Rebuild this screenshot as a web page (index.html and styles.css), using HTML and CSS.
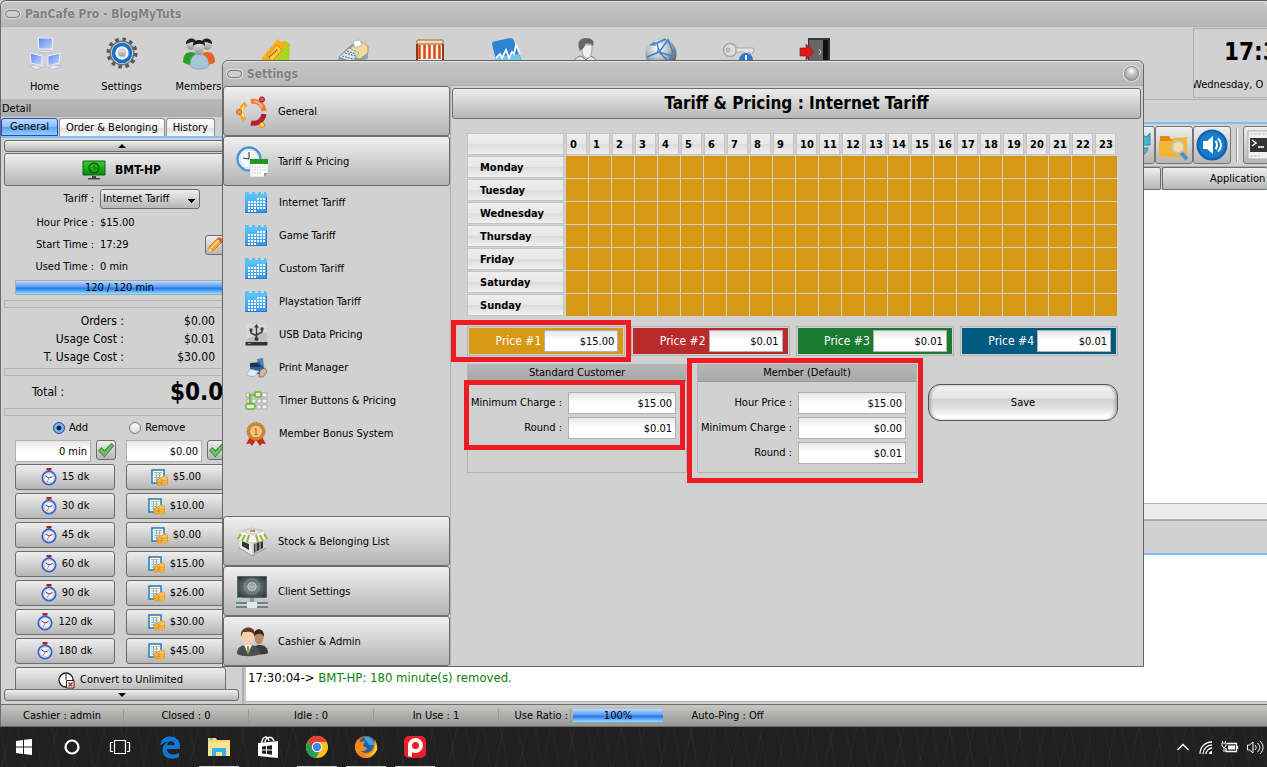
FILE: index.html
```html
<!DOCTYPE html>
<html lang="en">

<head>
    <meta charset="utf-8">
    <title>PanCafe Pro</title>
    <link rel="stylesheet" href="styles.css">
</head>

<body>
    <!-- shared icons and gradients -->
    <svg class="defs" width="0" height="0" aria-hidden="true">
        <defs>
            <linearGradient id="gblue" x1="0" y1="0" x2="0" y2="1"><stop offset="0" stop-color="#5cc4fa"/><stop offset="1" stop-color="#3a94e6"/></linearGradient>
            <linearGradient id="gscreen" x1="0" y1="0" x2="1" y2="1"><stop offset="0" stop-color="#5f83ee"/><stop offset="1" stop-color="#c2d6ff"/></linearGradient>
            <linearGradient id="ggreen" x1="0" y1="0" x2="0" y2="1"><stop offset="0" stop-color="#37d42c"/><stop offset="1" stop-color="#078a08"/></linearGradient>
            <linearGradient id="gsilver" x1="0" y1="0" x2="0" y2="1"><stop offset="0" stop-color="#f4f4f4"/><stop offset="1" stop-color="#8f8f8f"/></linearGradient>
            <radialGradient id="gball" cx=".4" cy=".3" r=".7"><stop offset="0" stop-color="#fff"/><stop offset=".5" stop-color="#b9bfc5"/><stop offset="1" stop-color="#50565c"/></radialGradient>
            <radialGradient id="gtube" cx=".5" cy=".5" r=".6"><stop offset="0" stop-color="#b4c2c0"/><stop offset=".5" stop-color="#5c6d6c"/><stop offset="1" stop-color="#303a3b"/></radialGradient>
        </defs>
        <symbol id="i-cal" viewBox="0 0 24 24">
            <path d="M2 1h3v2h3V1h3v2h3V1h3v2h3V1h2v2h1v18l-1 1H2l-1-1V1z" fill="#56c3fb"/>
            <rect x="1" y="4" width="22" height="18" rx="1" fill="url(#gblue)"/>
            <path d="M1.500 21.500h21V6" fill="none" stroke="#2577cf"/>
            <path d="M13 8h8M4 11h17M4 14h17M4 17h17M4 20h8" stroke="#fff" stroke-width="2" stroke-dasharray="2 1"/>
        </symbol>
        <symbol id="i-watch" viewBox="0 0 16 18">
            <rect x="5.500" y="0" width="5" height="2.500" fill="#b3201f"/>
            <path d="M7 2h2v2H7z" fill="#666"/>
            <circle cx="8" cy="10" r="6.700" fill="#f3f7ff" stroke="#3d63cb" stroke-width="1.800"/>
            <circle cx="8" cy="10" r="4.800" fill="none" stroke="#c6cfdf"/>
            <path d="M8 10L4.500 8M8 10l3.500-1.500" stroke="#444" fill="none"/>
            <path d="M8.500 9.500L6 14" stroke="#ef6c61"/>
        </symbol>
        <symbol id="i-coins" viewBox="0 0 17 17">
            <path d="M1 1h12v13H1z" fill="#fff" stroke="#177fc0" stroke-width="1.500"/>
            <path d="M3 3.500h8" stroke="#eda73a"/>
            <path d="M3 6h8M3 8.500h8M3 11h6M5.500 4v9M8.500 4v9" stroke="#8fb6d2"/>
            <path d="M6 11c0-2 5-2 5 0v4c0 1.500-5 1.500-5 0z" fill="#f6b23c" stroke="#d98a1b" stroke-width=".7"/>
            <path d="M11 8.500c0-2 5.500-2 5.500 0V15c0 1.500-5.500 1.500-5.500 0z" fill="#fbc456" stroke="#df8f1d" stroke-width=".7"/>
            <path d="M11 11c1 1 4.500 1 5.500 0M11 13.200c1 1 4.500 1 5.500 0M6 13c1 1 4 1 5 0" fill="none" stroke="#df8f1d" stroke-width=".8"/>
        </symbol>
        <symbol id="i-check" viewBox="0 0 16 16">
            <path d="M1.500 8.500L4 6l2.500 2.800L13 2.500l1.800 1.800L6.500 14z" fill="#6dc35e" stroke="#3e8b3c" stroke-width=".9"/>
        </symbol>
    </svg>

    <div class="desktop">
        <div class="app">
            <header class="titlebar"><span class="pill"></span>PanCafe Pro - BlogMyTuts</header>

            <nav class="toolbar">
                <button class="tool">
                    <svg width="34" height="34" viewBox="0 0 34 34"><g stroke="#eef0fa"><path d="M10.500 1h14v11h-14z" fill="url(#gscreen)"/><path d="M2 16l12 3v10L3 26z" fill="url(#gscreen)"/><path d="M32 16l-12 3v10l11-3z" fill="url(#gscreen)"/></g><path d="M13 13.500h9l2 2H11zM1 29l7-1 6 2.500-6 2zM33 29l-7-1-6 2.500 6 2z" fill="#e8e9f0" stroke="#a9abc0" stroke-width=".6"/></svg>
                    <span>Home</span>
                </button>
                <button class="tool">
                    <svg width="34" height="34" viewBox="0 0 34 34"><circle cx="17" cy="16" r="13.500" fill="none" stroke="#55575a" stroke-width="4" stroke-dasharray="3.500 3.560"/><circle cx="17" cy="16" r="12.500" fill="#717478"/><circle cx="17" cy="16" r="11" fill="#cfd6dc"/><circle cx="17" cy="16" r="8.500" fill="#eef3f8" stroke="#1b6fc4" stroke-width="3.500"/><circle cx="17" cy="16" r="4" fill="url(#gsilver)" stroke="#c6c9cc"/></svg>
                    <span>Settings</span>
                </button>
                <button class="tool">
                    <svg width="34" height="34" viewBox="0 0 34 34"><path d="M1 25c0-7 3-10 8-10s7 3 7 10c-3 3-11 4-15 0z" fill="#2f9e2a"/><path d="M33 25c0-7-3-10-8-10s-7 3-7 10c3 3 11 4 15 0z" fill="#e8641b"/><circle cx="9" cy="8" r="5" fill="url(#gsilver)"/><circle cx="25" cy="8" r="5" fill="url(#gsilver)"/><path d="M4 7c-1-6 10-8 10-1L10 5zM30 7c1-6-10-8-10-1l4-1z" fill="#222"/><path d="M8 29c0-8 3-12 9-12s10 4 10 12c-4 4-15 4-19 0z" fill="#a9c4d6" stroke="#7d9bb0" stroke-width=".7"/><ellipse cx="17" cy="11" rx="5" ry="7" fill="url(#gsilver)"/><path d="M11 9c-1-8 13-8 12 0-2-3-8-3-12 0z" fill="#1c1c1c"/></svg>
                    <span>Members</span>
                </button>
                <button class="tool" aria-label="Tickets">
                    <svg width="34" height="34" viewBox="0 0 34 34"><path d="M10 16L26 4l5 3-1 20H12z" fill="#a5d622"/><path d="M2 22L19 2l3 3 5-1v6L12 28z" fill="#fbae17"/><path d="M8 19l10-11 5 5-10 11z" fill="#ffca42" stroke="#c77f0b" stroke-width=".7"/><path d="M10 20l9-8" stroke="#704a05" stroke-width="2" stroke-dasharray="1 1"/></svg>
                </button>
                <button class="tool" aria-label="Cashier">
                    <svg width="34" height="34" viewBox="0 0 34 34"><path d="M4 18L16 7l16 2v12L20 30 1 24z" fill="#8aa3b5"/><path d="M15 10L26 5l6 4v7l-8 6-10-3z" fill="#efdb9c" stroke="#8a7b45" stroke-width=".6"/><path d="M3 20l10-9 10 5-7 9z" fill="#dbe5ea" stroke="#76858d" stroke-width=".6"/><path d="M17 4l7-1 2 5-7 3z" fill="#fff" stroke="#9aa" stroke-width=".7"/><path d="M6 19l11 3M9 16l11 3M11 14l9 3" stroke="#697e89" stroke-width="1.200" stroke-dasharray="2 1"/></svg>
                </button>
                <button class="tool" aria-label="Market">
                    <svg width="34" height="34" viewBox="0 0 34 34"><path d="M4 3h26v4H4z" fill="#f4dcae" stroke="#9c6a35"/><path d="M5 8h24v18H5z" fill="#fff4e6"/><path d="M6.500 8v14M11.500 8v14M16.500 8v14M21.500 8v14M26.500 8v14" stroke="#df451c" stroke-width="2.500"/><path d="M4 7v22M30 7v22" stroke="#8c3a1c" stroke-width="2"/></svg>
                </button>
                <button class="tool" aria-label="Reports">
                    <svg width="34" height="34" viewBox="0 0 34 34"><path d="M2 7q0-2 2-2.500L20 1q3 0 4 3l8 20-24 8z" fill="#2d84d6"/><path d="M5 20l24-3 3 8-24 7z" fill="#6fc9f0"/><path d="M6 21l4-4 2 4 4-8 3 8 3-6 2 2 2-9 4 9" fill="none" stroke="#fff" stroke-width="1.800"/></svg>
                </button>
                <button class="tool" aria-label="User">
                    <svg width="34" height="34" viewBox="0 0 34 34"><path d="M6 30c0-7 3-10 8-11l5 4 4-4c5 1 7 4 7 11z" fill="#e2e2e2" stroke="#777"/><path d="M15 8c0 13 3 13 6 13s4-5 4-13z" fill="#f0f0f0" stroke="#888" stroke-width=".7"/><path d="M13 14C9 5 13 1 19 1s9 3 7 8c-2-3-6-3-8-2 0 4-2 4-5 7z" fill="#666"/></svg>
                </button>
                <button class="tool" aria-label="Network">
                    <svg width="34" height="34" viewBox="0 0 34 34"><circle cx="17" cy="17" r="15.500" fill="url(#gball)"/><path d="M6 8l7-2 9-4M13 6l2 9 13 4M15 15L3 20M15 15l9-12 5 12-4 10-10-10" fill="none" stroke="#3a7fd0" stroke-width="1.400"/><g fill="#4c92e2"><circle cx="10" cy="7" r="2"/><circle cx="15" cy="14" r="2"/><circle cx="24" cy="4" r="1.800"/></g></svg>
                </button>
                <button class="tool" aria-label="Keys">
                    <svg width="34" height="34" viewBox="0 0 34 34"><circle cx="9" cy="13" r="6.500" fill="#dcdcdc" stroke="#a9a9a9" stroke-width="1.500"/><circle cx="7" cy="13" r="2" fill="#c4c4c4" stroke="#a5a5a5"/><path d="M15 11h17l1 2-2 4-3-2-3 2-2-2h-8z" fill="#e2e2e2" stroke="#a9a9a9"/><circle cx="25" cy="23" r="7" fill="#2c76cd"/><path d="M25 18v8" stroke="#fff" stroke-width="2"/></svg>
                </button>
                <button class="tool" aria-label="Exit">
                    <svg width="34" height="34" viewBox="0 0 34 34"><path d="M10 1h22v31H10z" fill="#353535"/><path d="M11 3h14v28H11z" fill="#666"/><path d="M25 3h5v28h-5z" fill="#111"/><path d="M21 12l2 3-2 3" stroke="#ccc" fill="none"/><path d="M2 11h6V7l8 8-8 8v-4H2z" fill="#dc1a1d" stroke="#920f10" stroke-width=".6"/></svg>
                </button>
                <div class="clock">
                    <strong>17:30</strong>
                    <span>Wednesday, O</span>
                </div>
            </nav>

            <div class="work">
                <aside class="detail">
                    <div class="caption">Detail</div>
                    <div class="tabs">
                        <button class="tab active">General</button>
                        <button class="tab">Order &amp; Belonging</button>
                        <button class="tab">History</button>
                    </div>
                    <div class="detail-body">
                        <button class="scroller" aria-label="Scroll up"><i class="up"></i></button>
                        <div class="machine">
                            <svg width="24" height="20" viewBox="0 0 24 20"><path d="M1 1h22v14H1z" fill="url(#ggreen)" stroke="#1d5f1d"/><path d="M10 16h4v2h4v1.500H6V18h4z" fill="#444"/><circle cx="12" cy="8" r="5" fill="none" stroke="#115a12" stroke-width="1.400"/><path d="M12 5v3h3" fill="none" stroke="#115a12"/></svg>
                            BMT-HP
                        </div>
                        <div class="info">
                            <label class="key" for="tariff">Tariff :</label>
                            <select id="tariff" class="drop"><option>Internet Tariff</option></select>
                            <span class="key">Hour Price :</span><span>$15.00</span>
                            <span class="key">Start Time :</span>
                            <span class="start">17:29
                                <button class="mini" aria-label="Edit start time"><svg width="18" height="18" viewBox="0 0 18 18"><path d="M2 16l1.500-5.500L12 2l4 4-8.500 8.500z" fill="#f9a534" stroke="#b8701b" stroke-width=".8"/><path d="M11 3l1.500-1.500c2-1 4 1.500 3.500 3L14.500 6.500z" fill="#e65232"/><path d="M5 12l8-8" stroke="#ffe08c" stroke-width="1.500"/><path d="M2 16l1.200-4 3 3z" fill="#f6e3c0"/></svg></button>
                            </span>
                            <span class="key">Used Time :</span><span>0 min</span>
                        </div>
                        <div class="bar minutes"><span>120 / 120 min</span></div>
                        <div class="rule"></div>
                        <dl class="costs">
                            <dt>Orders :</dt><dd>$0.00</dd>
                            <dt>Usage Cost :</dt><dd>$0.01</dd>
                            <dt>T. Usage Cost :</dt><dd>$30.00</dd>
                        </dl>
                        <div class="rule"></div>
                        <div class="total"><span>Total :</span><strong>$0.00</strong></div>
                        <div class="rule"></div>
                        <div class="mode">
                            <label><input type="radio" name="mode" checked>Add</label>
                            <label><input type="radio" name="mode">Remove</label>
                        </div>
                        <div class="amounts">
                            <input class="field" aria-label="Minutes" value="0 min">
                            <button class="mini" aria-label="Apply minutes"><svg width="18" height="18"><use href="#i-check"/></svg></button>
                            <input class="field" aria-label="Money" value="$0.00">
                            <button class="mini" aria-label="Apply money"><svg width="18" height="18"><use href="#i-check"/></svg></button>
                        </div>
                        <div class="presets">
                            <button class="btn"><svg width="16" height="18"><use href="#i-watch"/></svg>15 dk</button>
                            <button class="btn"><svg width="17" height="17"><use href="#i-coins"/></svg>$5.00</button>
                            <button class="btn"><svg width="16" height="18"><use href="#i-watch"/></svg>30 dk</button>
                            <button class="btn"><svg width="17" height="17"><use href="#i-coins"/></svg>$10.00</button>
                            <button class="btn"><svg width="16" height="18"><use href="#i-watch"/></svg>45 dk</button>
                            <button class="btn"><svg width="17" height="17"><use href="#i-coins"/></svg>$0.00</button>
                            <button class="btn"><svg width="16" height="18"><use href="#i-watch"/></svg>60 dk</button>
                            <button class="btn"><svg width="17" height="17"><use href="#i-coins"/></svg>$15.00</button>
                            <button class="btn"><svg width="16" height="18"><use href="#i-watch"/></svg>90 dk</button>
                            <button class="btn"><svg width="17" height="17"><use href="#i-coins"/></svg>$26.00</button>
                            <button class="btn"><svg width="16" height="18"><use href="#i-watch"/></svg>120 dk</button>
                            <button class="btn"><svg width="17" height="17"><use href="#i-coins"/></svg>$30.00</button>
                            <button class="btn"><svg width="16" height="18"><use href="#i-watch"/></svg>180 dk</button>
                            <button class="btn"><svg width="17" height="17"><use href="#i-coins"/></svg>$45.00</button>
                            <button class="btn wide"><svg width="17" height="17" viewBox="0 0 17 17"><circle cx="8" cy="8" r="7" fill="#fff" stroke="#222" stroke-width="1.300"/><path d="M8 2v6" stroke="#222"/><path d="M8.500 8.500h7.500V16H8.500z" fill="#fff" stroke="#222"/><path d="M10.500 10.500l4 4M14.500 10.500l-4 4" stroke="#d32a1c" stroke-width="1.600"/></svg>Convert to Unlimited</button>
                        </div>
                    </div>
                    <button class="scroller" aria-label="Scroll down"><i class="down"></i></button>
                </aside>

                <section class="main">
                    <div class="actions">
                        <button class="act" aria-label="Refresh"><svg width="32" height="32" viewBox="0 0 32 32"><path d="M4 14C6 4 19 1 26 8l4-4v12H18l4-4C16 6 9 9 8 14zM28 19c-2 10-15 13-22 6l-3 4V17h11l-3 4c6 6 12 3 13-2z" fill="#43b6cf" stroke="#247c92" stroke-width=".8"/></svg></button>
                        <button class="act" aria-label="Search folder"><svg width="32" height="32" viewBox="0 0 32 32"><path d="M2 7h9l2 3h15v6H2z" fill="#dd8b10"/><path d="M1 12h12l3-3 13-1v19c0 1-28 2-28 0z" fill="#f4b532"/><path d="M22 23l7 7" stroke="#4a91c6" stroke-width="4"/><circle cx="20" cy="18" r="6" fill="#f6dda0" stroke="#bfc3c4" stroke-width="2"/></svg></button>
                        <button class="act" aria-label="Sound"><svg width="32" height="32" viewBox="0 0 32 32"><circle cx="16" cy="16" r="15.500" fill="#1263ae"/><circle cx="16" cy="16" r="13" fill="#1a7bc8"/><path d="M7 12h4l6-5v18l-6-5H7z" fill="#fff"/><path d="M19.500 12c2 2 2 6 0 8M22 9.500c4 4 4 9 0 13" fill="none" stroke="#fff" stroke-width="2"/></svg></button>
                        <span class="split"></span>
                        <button class="act" aria-label="Console"><svg width="32" height="32" viewBox="0 0 32 32"><path d="M2 2h28v28H2z" fill="#f2f2f2" stroke="#aaa"/><path d="M4 5h22M4 27h10" stroke="#bbb" stroke-dasharray="3 1"/><path d="M4 9h28v14H4z" fill="#333"/><path d="M6 11l4 3-4 3M12 18h6" fill="none" stroke="#fff" stroke-width="1.500"/></svg></button>
                    </div>
                    <div class="columns"><span class="col"></span><span class="col app-col">Application</span></div>
                    <div class="list"></div>
                    <div class="hscroll"></div>
                    <div class="strip"></div>
                    <div class="log">
                        <p>17:30:04-&gt; <span>BMT-HP: 120 minute(s)</span></p>
                        <p>17:30:04-&gt; <span>BMT-HP: 180 minute(s) removed.</span></p>
                    </div>
                </section>
            </div>

            <footer class="status">
                <span>Cashier : admin</span>
                <span>Closed : 0</span>
                <span>Idle : 0</span>
                <span>In Use : 1</span>
                <span class="ratio">Use Ratio :</span>
                <div class="bar"><span>100%</span></div>
                <span>Auto-Ping : Off</span>
            </footer>
        </div>

        <!-- settings window -->
        <div class="dialog" role="dialog" aria-label="Settings">
            <header class="titlebar"><span class="pill"></span>Settings<button class="ball" aria-label="Close"></button></header>
            <div class="dialog-body">
                <nav class="side">
                    <button class="group">
                        <svg width="32" height="32" viewBox="0 0 32 32"><g fill="none" stroke-width="5"><path d="M10 7.500A10.500 10.500 0 0 0 9 24" stroke="#eea63a"/><path d="M15 5.500A10.500 10.500 0 0 1 28 15" stroke="#ec7c3c"/><path d="M28 18A10.500 10.500 0 0 1 15 27" stroke="#b8202f"/></g><path d="M8 10c-2 4-2 8 0 11" stroke="#ffe09a" stroke-width="2" fill="none"/><path d="M18 5.500c4 0 7 3 8 6" stroke="#ffb483" stroke-width="2" fill="none"/><circle cx="26" cy="3.500" r="2.600" fill="#d94f63" stroke="#9c1f30"/><circle cx="3" cy="16" r="2.600" fill="#f49b61" stroke="#ce5d20"/><circle cx="26" cy="29" r="2.600" fill="#ffd25f" stroke="#d79016"/></svg>
                        General
                    </button>
                    <button class="group">
                        <svg width="32" height="32" viewBox="0 0 32 32"><circle cx="13" cy="13" r="11.500" fill="#f4f9fd" stroke="#4d94d4" stroke-width="2.400"/><circle cx="13" cy="13" r="9" fill="none" stroke="#cfdfea"/><path d="M13 13V6M13 13l-6-1" stroke="#333"/><path d="M14 13h18v14l-4 4H14z" fill="#fbfbfb" stroke="#bbb" stroke-width=".6"/><path d="M14 13h18v5H14z" fill="#219a1f"/><path d="M16 21h14M16 24h14M16 27h10" stroke="#c2c2c2" stroke-dasharray="1.500 1"/><path d="M28 31v-4h4z" fill="#999"/></svg>
                        Tariff &amp; Pricing
                    </button>
                    <a class="entry" href="#"><svg width="24" height="24"><use href="#i-cal"/></svg>Internet Tariff</a>
                    <a class="entry" href="#"><svg width="24" height="24"><use href="#i-cal"/></svg>Game Tariff</a>
                    <a class="entry" href="#"><svg width="24" height="24"><use href="#i-cal"/></svg>Custom Tariff</a>
                    <a class="entry" href="#"><svg width="24" height="24"><use href="#i-cal"/></svg>Playstation Tariff</a>
                    <a class="entry" href="#"><svg width="24" height="24" viewBox="0 0 24 24"><path d="M2 1h21v18H2z" fill="#c0c0c0"/><path d="M2 1h21v8L2 16z" fill="#d8d8d8"/><path d="M1.500 19h22v3.500h-22z" fill="#2d3338"/><path d="M4 20.500h3" stroke="#35a0e8"/><path d="M12.500 4v12M7 7v3l5.500 3M18 6v3l-5.500 3" stroke="#3a3a3a" stroke-width="1.500" fill="none"/><path d="M10 4.500L12.500 1 15 4.500z" fill="#3a3a3a"/><circle cx="12.500" cy="16" r="2" fill="#3a3a3a"/><path d="M5.500 5.500h3v3h-3zM16.500 4.500h3v3h-3z" fill="#3a3a3a"/></svg>USB Data Pricing</a>
                    <a class="entry" href="#"><svg width="24" height="24" viewBox="0 0 24 24"><path d="M13 3l6-1 1 9-6 2z" fill="#4a82ba"/><path d="M6 7l9-1 6 7-3 6-12-3z" fill="#2e5f97"/><path d="M6 7l8 0 3 4-11 0z" fill="#16355c"/><path d="M6 13l9 2-5 6-8-2z" fill="#e6e9ef" stroke="#8b93a1" stroke-width=".6"/><path d="M16 14l5-2 2 4-4 5h-4z" fill="#c9b8a2" stroke="#5e503f" stroke-width=".6"/></svg>Print Manager</a>
                    <a class="entry" href="#"><svg width="24" height="24" viewBox="0 0 24 24"><g fill="#f7f7f7" stroke="#a8a8a8"><path d="M2 4h4v4H2zM18 4h5v4h-5zM3 10h4v4H3zM8 10h4v4H8zM13 10h4v4h-4zM18 10h5v4h-5zM13 16h4v4h-4zM18 16h5v4h-5z"/></g><path d="M6 15V6h7" fill="none" stroke="#79bf42" stroke-width="2.400"/><rect x="11" y="3" width="6" height="5" rx="1" fill="#dff3c8" stroke="#6cb235" stroke-width="1.500"/><rect x="2" y="15" width="9" height="5" rx="1" fill="#dff3c8" stroke="#6cb235" stroke-width="1.500"/></svg>Timer Buttons &amp; Pricing</a>
                    <a class="entry" href="#"><svg width="24" height="24" viewBox="0 0 24 24"><path d="M6 15l-4 7 4-.5 2 2.500 4-6 4 6 2-2.500 4 .5-4-7z" fill="#cf2320"/><circle cx="12" cy="9.500" r="9" fill="#cf8a2c" stroke="#a3681b" stroke-width=".8" stroke-dasharray="2 1"/><circle cx="12" cy="9.500" r="6.500" fill="#f1c777" stroke="#b87a26"/><path d="M10.500 7.500L12 6.500v6M10.500 12.500h3" stroke="#9b641a" fill="none"/></svg>Member Bonus System</a>
                    <div class="spacer"></div>
                    <button class="group">
                        <svg width="32" height="32" viewBox="0 0 32 32"><path d="M3 12l13 5v12L4 22z" fill="#e8e8e4"/><path d="M29 12l-13 5v12l13-8z" fill="#cfcfcb"/><path d="M6 15l7 3v6l-7-4zM18 18l9-4v8l-9 5z" fill="#30362b"/><path d="M20 17v9M24 15v9" stroke="#d8d8d0"/><path d="M5 5l11-3 12 3 3 8-4 2-11 2-11-2-4-2z" fill="#f5f5f0" stroke="#b9b9b0" stroke-width=".6"/><path d="M5 8l-3 5M9 9l-3 6M13 9l-2 7M20 9l2 7M24 9l3 6M28 8l3 5" stroke="#96b43d" stroke-width="2"/><path d="M6 5l10-2 11 2-10 4z" fill="#e9e7e5" stroke="#aaa" stroke-width=".6"/><path d="M14 4h5v2h-5z" fill="#c8887c"/><path d="M3 22l13 8 14-8" fill="none" stroke="#999"/></svg>
                        Stock &amp; Belonging List
                    </button>
                    <button class="group">
                        <svg width="32" height="32" viewBox="0 0 32 32"><path d="M1.500 .5h29v21h-29z" fill="url(#gtube)" stroke="#59656a"/><circle cx="16" cy="10.500" r="4" fill="none" stroke="#c8d4d2"/><circle cx="16" cy="10.500" r="7.500" fill="none" stroke="#839391"/><path d="M2 21.500h4" stroke="#2fd13c"/><path d="M14 22h4v4h-4z" fill="#8b99a1"/><path d="M0 26h32v6H0z" fill="#71818c"/><path d="M0 29h32" stroke="#c6d0d6" stroke-width="2"/><path d="M11 26h10v6H11z" fill="#e3e8eb"/></svg>
                        Client Settings
                    </button>
                    <button class="group">
                        <svg width="32" height="32" viewBox="0 0 32 32"><path d="M16 27c0-6 3-8 8-8s8 3 8 8c-3 2-13 2-16 0z" fill="#3b3b3b"/><ellipse cx="23" cy="12" rx="4.500" ry="6.500" fill="#bb8a66"/><path d="M18 10c-1-9 11-9 10 1-2-4-6-4-10-1z" fill="#3b2517"/><path d="M1 28c0-7 4-9 11-9s12 2 12 9c-5 3-18 3-23 0z" fill="#4d4d4f"/><path d="M8 19h8l-4 9z" fill="#f1f1f1"/><path d="M11 20h2l1 5-2 3-1-3z" fill="#8ea63b"/><ellipse cx="12" cy="11" rx="6" ry="8" fill="#f6cfae"/><path d="M5 11C3-1 21-2 19 11c-2-7-8-5-12-5z" fill="#613c22"/></svg>
                        Cashier &amp; Admin
                    </button>
                </nav>

                <section class="page">
                    <h1>Tariff &amp; Pricing : Internet Tariff</h1>
                    <div class="sheet">
                        <table class="hours">
                            <thead><tr id="hourhead"><th class="corner"></th></tr></thead>
                            <tbody id="hourbody"></tbody>
                        </table>

                        <div class="prices">
                            <label class="price marked gold">Price #1 <input class="field" value="$15.00"></label>
                            <label class="price red">Price #2 <input class="field" value="$0.01"></label>
                            <label class="price green">Price #3 <input class="field" value="$0.01"></label>
                            <label class="price blue">Price #4 <input class="field" value="$0.01"></label>
                        </div>

                        <div class="customers">
                            <fieldset class="panel">
                                <div class="panel-title">Standard Customer</div>
                                <div class="rows marked">
                                    <label>Minimum Charge : <input class="field" value="$15.00"></label>
                                    <label>Round : <input class="field" value="$0.01"></label>
                                </div>
                            </fieldset>
                            <fieldset class="panel marked">
                                <div class="panel-title">Member (Default)</div>
                                <div class="rows">
                                    <label>Hour Price : <input class="field" value="$15.00"></label>
                                    <label>Minimum Charge : <input class="field" value="$0.00"></label>
                                    <label>Round : <input class="field" value="$0.01"></label>
                                </div>
                            </fieldset>
                            <button class="save">Save</button>
                        </div>
                    </div>
                </section>
            </div>
        </div>

        <div class="taskbar">
            <button class="task" aria-label="Start"><svg width="24" height="24" viewBox="0 0 24 24"><path d="M4 6l7-1v6.500H4zM12 4.800L20 4v7.500h-8zM4 12.500h7V19l-7-1zM12 12.500h8V20l-8-1z" fill="#fff"/></svg></button>
            <button class="task" aria-label="Search"><svg width="24" height="24" viewBox="0 0 24 24"><circle cx="12" cy="12" r="6.500" fill="none" stroke="#fff" stroke-width="2.200"/></svg></button>
            <button class="task" aria-label="Task view"><svg width="24" height="24" viewBox="0 0 24 24"><path d="M6.500 5.500h11v13h-11zM5 7.500H2.500v9H5M19 7.500h2.500v9H19" fill="none" stroke="#fff" stroke-width="1.200"/></svg></button>
            <button class="task pin" aria-label="Edge"><svg width="24" height="24" viewBox="0 0 24 24"><path d="M2 11C3 4 7 1.500 12 1.500c6 0 10 4 10 9.500v3H9c0 4 3 5.500 6.500 5.500 2 0 4-.6 5.500-1.500v4c-2 1-4.500 1.500-7 1.500C8 23.500 4.500 20 4.500 15c0-4 2.500-7 6-8.500-4 .3-6.500 2-8.500 4.500zm7-1h7.500c0-2.500-1.500-3.700-3.500-3.700S9.500 7.500 9 10z" fill="#0f78d4"/></svg></button>
            <button class="task pin open" aria-label="Explorer"><svg width="24" height="24" viewBox="0 0 24 24"><path d="M1 3h8l1 2h13v16H1z" fill="#f7d673"/><path d="M1 7h22v14H1z" fill="#fbe493"/><path d="M3 4h3" stroke="#2ba7e0"/><path d="M5 21v-8h14v8h-4v-4H9v4z" fill="#34b3ec"/></svg></button>
            <button class="task pin" aria-label="Store"><svg width="24" height="24" viewBox="0 0 24 24"><path d="M2 8l20-2v17L2 21z" fill="#fff"/><path d="M6 8c0-7 6-8 7-2M9 7c1-6 7-6 9-1" fill="none" stroke="#fff" stroke-width="1.500"/><path d="M6 11.500l4-.5v3.500H6zM11 11l5-.7v4.200h-5zM6 15.500h4V19l-4-.5zM11 15.500h5v4.200l-5-.6z" fill="#222"/></svg></button>
            <button class="task pin open" aria-label="Chrome"><svg width="24" height="24" viewBox="0 0 24 24"><circle cx="12" cy="12" r="11" fill="#fbc21c"/><path d="M2.500 6.500A11 11 0 0 1 22 7H12L8 14z" fill="#dd4335"/><path d="M2.500 6.500A11 11 0 0 0 11 23l5-9H9z" fill="#21a056"/><circle cx="12" cy="12" r="5.200" fill="#fff"/><circle cx="12" cy="12" r="4.200" fill="#4284f0"/></svg></button>
            <button class="task pin open" aria-label="Firefox"><svg width="24" height="24" viewBox="0 0 24 24"><circle cx="12" cy="12" r="11" fill="#e96a13"/><circle cx="13" cy="10" r="8.500" fill="#1d62a8"/><path d="M10 2c5-1 10 2 10 8h-5c-1-3-4-4-5-8z" fill="#3fa3dc"/><path d="M1 12c0-3 1-6 3-8l2 3 5-1-2 5 4 2c-1 3-4 3-6 3 4 4 12 2 13-6l1-5c4 7 1 18-9 18C6 23 1 18 1 12z" fill="#f3891c"/><path d="M20 6c3 7-2 14-8 14 6 3 13-4 11-9z" fill="#fcc931"/></svg></button>
            <button class="task pin open" aria-label="PanCafe"><svg width="24" height="24" viewBox="0 0 24 24"><rect x="1" y="1" width="22" height="22" rx="5" fill="#e8202a"/><circle cx="12.500" cy="10.500" r="5.500" fill="none" stroke="#fff" stroke-width="4"/><path d="M5 10.500h4V22l-4-1z" fill="#fff"/></svg></button>
            <div class="tray">
                <svg width="16" height="16" viewBox="0 0 16 16"><path d="M2.500 11L8 5.500l5.500 5.500" fill="none" stroke="#fff" stroke-width="1.300"/></svg>
                <svg width="16" height="16" viewBox="0 0 16 16"><g fill="none" stroke="#fff" stroke-width="1.300"><path d="M2 15C2 8 7 3 14 3M5 15c0-5 4-9 9-9M8 15c0-3 3-6 6-6"/></g><path d="M11 15c0-2 1-3 3-3v3z" fill="#fff"/></svg>
                <svg width="18" height="16" viewBox="0 0 18 16"><path d="M6 4.500h9.500v8H5V9M16.500 7v3" fill="none" stroke="#fff" stroke-width="1.300"/><path d="M7 6.500h7v4H7z" fill="#fff"/><path d="M1 4h4v3L3 8.500 1 7zM1.500 2v2M4.500 2v2M3 8v5" fill="none" stroke="#fff"/></svg>
                <svg width="18" height="16" viewBox="0 0 18 16"><path d="M1.500 6h2L7 3v11l-3.500-3h-2z" fill="none" stroke="#fff"/><path d="M9 6c1.500 1.500 1.500 3.500 0 5M11.500 4c3 3 3 6 0 9M14 2c4 4 4 9 0 13" fill="none" stroke="#fff"/></svg>
            </div>
        </div>
    </div>
    <script src="script.js"></script>
</body>

</html>
```
FILE: styles.css
```css
* {
    box-sizing: border-box;
    margin: 0;
    padding: 0;
}

body {
    font-family: "DejaVu Sans Condensed", Tahoma, "Noto Sans", sans-serif;
    font-size: 11px;
    line-height: 14px;
    color: #000;
    background: #d1d1d1;
    overflow: hidden;
}

button,
input,
select {
    font: inherit;
    color: inherit;
}

button {
    border: none;
    background: none;
}

svg {
    flex: none;
}

.defs {
    position: absolute;
}

.desktop {
    position: relative;
    height: 100vh;
    display: flex;
    flex-direction: column;
}

/* main window */
.app {
    flex: 1;
    min-height: 0;
    display: flex;
    flex-direction: column;
    border-top: 1px solid #5e5e5e;
    border-left: 1px solid #6c6c6c;
    border-radius: 6px 0 0 0;
    background: #d1d1d1;
}

.titlebar {
    flex: none;
    height: 26px;
    display: flex;
    align-items: center;
    gap: 5px;
    padding: 0 4px;
    border-top: 1px solid #e4e4e4;
    border-bottom: 1px solid #b0b0b0;
    border-radius: 6px 6px 0 0;
    background: linear-gradient(#c5c5c3, #b8b8b8);
    color: #7e7e7e;
    font-size: 12px;
    font-weight: bold;
    text-shadow: 0 0 2px #ddd;
}

.pill {
    width: 15px;
    height: 8px;
    border: 1px solid #777;
    border-radius: 4px;
    background: #cfcfcf;
    box-shadow: 0 0 1px 1px #dedede;
}

.toolbar {
    flex: none;
    height: 72px;
    display: flex;
    padding-left: 5px;
    overflow: hidden;
}

.tool {
    flex: none;
    width: 77px;
    padding-top: 10px;
    display: flex;
    flex-direction: column;
    align-items: center;
    gap: 9px;
}

.clock {
    flex: none;
    width: 74px;
    height: 70px;
    margin: 1px 0 0 auto;
    padding-top: 12px;
    border: 1px solid #b0b0b0;
    border-right: none;
    overflow: hidden;
    white-space: nowrap;
    display: flex;
    flex-direction: column;
    gap: 15px;
}

.clock strong {
    padding-left: 30px;
    font-size: 24px;
    line-height: 22px;
}

.clock span {
    text-indent: -2px;
}

.work {
    flex: 1;
    min-height: 0;
    display: flex;
}

/* left panel */
.detail {
    flex: none;
    width: 243px;
    display: flex;
    flex-direction: column;
    border-right: 2px solid #b0b0b0;
    padding: 0 3px 3px 3px;
}

.caption {
    margin: 0 -3px;
    padding: 3px 1px 1px;
    height: 18px;
    background: linear-gradient(#b9b9b9, #adadad);
}

.tabs {
    display: flex;
    gap: 1px;
    margin: 0 -3px;
    height: 21px;
    padding-top: 1px;
    border-bottom: 2px solid #7fbef8;
}

.tab {
    padding: 1px 6px 0;
    border: 1px solid #8b8b8b;
    border-bottom: none;
    border-radius: 3px 3px 0 0;
    background: linear-gradient(#fff, #f3f3f3 50%, #dedede 51%, #f8f8f8);
}

.tab.active {
    padding: 0 8px;
    border: 1px solid #2b48c6;
    background: linear-gradient(#c0dcfc, #8bbcf8 50%, #5e9ff3 51%, #8fd0fc);
}

.scroller {
    flex: none;
    height: 12px;
    display: flex;
    align-items: center;
    justify-content: center;
    border: 1px solid #6c6c6c;
    border-radius: 3px;
    background: linear-gradient(#f0f0f0, #b6b6b6);
}

.up,
.down {
    border: 4px solid transparent;
    border-top: none;
    border-bottom-color: #000;
}

.down {
    border-top: 4px solid #000;
    border-bottom: none;
}

.detail-body {
    flex: 1;
    min-height: 0;
    overflow: hidden;
    padding-top: 2px;
    display: flex;
    flex-direction: column;
}

.detail-body > * {
    flex: none;
}

.machine {
    height: 33px;
    margin-top: 1px;
    display: flex;
    align-items: center;
    justify-content: center;
    gap: 9px;
    border: 1px solid #6c6c6c;
    border-radius: 3px;
    background: linear-gradient(#eee, #b6b6b6);
    font-size: 12px;
    font-weight: bold;
}

.info {
    display: grid;
    grid-template-columns: 90px 1fr;
    grid-template-rows: 26px 22px 22px 22px;
    column-gap: 6px;
    align-items: center;
}

.key {
    text-align: right;
}

.drop {
    width: 100px;
    height: 20px;
    padding: 0 2px;
    border: 1px solid #6c6c6c;
    border-radius: 3px;
    appearance: none;
    background:
        linear-gradient(to bottom right, #000 50%, transparent 50%) right 3px top 9px / 4px 4px no-repeat,
        linear-gradient(to bottom left, #000 50%, transparent 50%) right 7px top 9px / 4px 4px no-repeat,
        linear-gradient(#eee, #b6b6b6);
}

.start {
    display: flex;
    align-items: center;
    justify-content: space-between;
    padding-right: 14px;
}

.mini {
    flex: none;
    width: 20px;
    height: 20px;
    display: flex;
    align-items: center;
    justify-content: center;
    border: 1px solid #6c6c6c;
    border-radius: 3px;
    background: linear-gradient(#eee, #b6b6b6);
}

.bar {
    height: 13px;
    text-align: center;
    background: linear-gradient(#bcdcff, #5a9cf6 45%, #2f74e6 55%, #69bdff 85%, #8be6ff);
}

.minutes {
    height: 15px;
    margin: 2px 15px 5px 11px;
    border: 1px solid #aaa;
    line-height: 13px;
}

.rule {
    height: 8px;
    border: 1px solid #b3b3b3;
}

.costs {
    display: grid;
    grid-template-columns: 120px 1fr;
    line-height: 18px;
    padding: 4px 24px 2px 0;
    text-align: right;
    font-size: 12px;
}

.total {
    height: 32px;
    display: flex;
    align-items: center;
    padding-left: 28px;
    font-size: 12px;
}

.total span {
    width: 138px;
}

.total strong {
    font-size: 24px;
}

.mode {
    height: 24px;
    display: flex;
    gap: 41px;
    padding-left: 49px;
}

.mode label {
    display: flex;
    align-items: center;
    gap: 4px;
}

.mode input {
    width: 12px;
    height: 12px;
    appearance: none;
    border: 1px solid #777;
    border-radius: 50%;
    background: linear-gradient(#fff, #ddd);
}

.mode input:checked {
    border-color: #1c4f9c;
    background: radial-gradient(#123 0 2px, #8cc4fa 3px, #3f86e0);
}

.field {
    width: 76px;
    height: 22px;
    padding: 0 3px;
    border: 1px solid #b0b0b0;
    background: linear-gradient(#e6e6e6, #fff 9px);
    text-align: right;
}

.amounts {
    display: flex;
    gap: 5px;
    padding: 0 0 2px 11px;
}

.amounts .mini + .field {
    margin-left: 5px;
}

.presets {
    display: grid;
    grid-template-columns: 100px 100px;
    gap: 3px 11px;
    padding: 0 0 0 11px;
}

.btn {
    height: 26px;
    display: flex;
    align-items: center;
    justify-content: center;
    gap: 5px;
    border: 1px solid #6c6c6c;
    border-radius: 3px;
    background: linear-gradient(#eee, #b6b6b6);
}

.btn.wide {
    grid-column: 1 / 3;
}

/* right side */
.main {
    flex: 1;
    min-width: 0;
    display: flex;
    flex-direction: column;
    border-top: 1px solid #b0b0b0;
    border-left: 2px solid #c6c6c6;
    padding-top: 22px;
}

.actions {
    height: 45px;
    display: flex;
    justify-content: flex-end;
    align-items: center;
    margin-right: -14px;
    border-top: 2px solid #7fbef8;
    border-bottom: 1px solid #b0b0b0;
}

.act {
    flex: none;
    width: 38px;
    height: 38px;
    display: flex;
    align-items: center;
    justify-content: center;
    border: 1px solid #777;
    border-radius: 3px;
    background: linear-gradient(#eee, #b6b6b6);
}

.split {
    width: 2px;
    height: 34px;
    margin: 0 5px;
    border-left: 1px solid #999;
    border-right: 1px solid #fff;
}

.columns {
    height: 23px;
    display: flex;
    gap: 1px;
}

.col {
    flex: 1;
    border: 1px solid #6c6c6c;
    border-radius: 2px;
    background: linear-gradient(#eee, #b6b6b6);
}

.app-col {
    flex: none;
    width: 105px;
    padding: 4px 0 0 47px;
    border-right: none;
}

.list {
    flex: 1;
    background: #fff;
}

.hscroll {
    height: 17px;
    border-top: 1px solid #b0b0b0;
    border-bottom: 1px solid #b0b0b0;
    background: #ececec;
}

.strip {
    height: 35px;
    border-top: 1px solid #a8a8a8;
    border-bottom: 2px solid #7fbef8;
}

.log {
    height: 147px;
    display: flex;
    flex-direction: column;
    justify-content: flex-end;
    padding: 0 2px 15px;
    margin-bottom: 2px;
    background: #fff;
    border-bottom: 1px solid #b0b0b0;
    font-size: 13px;
    line-height: 17px;
}

.log span {
    color: #078207;
}

.status {
    flex: none;
    height: 23px;
    display: flex;
    align-items: center;
    border-top: 1px solid #6c6c6c;
    border-bottom: 1px solid #6c6c6c;
    background: linear-gradient(#c6c6c4, #979797);
}

.status > span {
    width: 125px;
    text-align: center;
    border-right: 1px solid #999;
}

.status > span:first-child {
    width: 123px;
}

.status > .ratio {
    width: 72px;
    padding-right: 2px;
    text-align: right;
}

.status .bar {
    width: 90px;
    margin: 0 2px;
}

.status > span:last-child {
    border: none;
}

/* settings window */
.dialog {
    position: absolute;
    top: 60px;
    left: 222px;
    right: 123px;
    border: 1px solid #666;
    border-radius: 6px 6px 0 0;
    background: #d1d1d1;
}

.dialog .titlebar {
    height: 25px;
}

.ball {
    width: 15px;
    height: 15px;
    margin-left: auto;
    border: 1px solid #888;
    border-radius: 50%;
    background: radial-gradient(circle at 50% 30%, #fff, #c4c4c4 40%, #8d8d8d);
    box-shadow: 0 0 1px 1px #e3e3e3;
}

.dialog-body {
    display: flex;
    min-height: 580px;
}

.side {
    flex: none;
    width: 228px;
    display: flex;
    flex-direction: column;
    border-right: 1px solid #b0b0b0;
}

.group {
    height: 50px;
    display: flex;
    align-items: center;
    gap: 10px;
    padding: 1px 0 0 12px;
    border: 1px solid #6c6c6c;
    border-radius: 3px;
    background: linear-gradient(#f0f0f0, #b4b4b4);
}

.entry {
    height: 33px;
    display: flex;
    align-items: center;
    gap: 11px;
    padding-left: 21px;
    color: #000;
    text-decoration: none;
}

.spacer {
    flex: 1;
}

.page {
    flex: 1;
    min-width: 0;
    padding: 2px 2px 0 1px;
}

.page h1 {
    height: 31px;
    border: 1px solid #6c6c6c;
    border-radius: 3px;
    background: linear-gradient(#eee, #b6b6b6);
    font-size: 17px;
    line-height: 29px;
    text-align: center;
}

.sheet {
    padding: 14px 23px 0 15px;
}

/* week x hour grid */
.hours {
    width: 100%;
    border-spacing: 0;
    table-layout: fixed;
}

.hours th,
.hours td {
    height: 23px;
    border-right: 1px solid #d1d1d1;
    border-bottom: 1px solid #d1d1d1;
    background-clip: padding-box;
}

.hours th {
    padding: 1px 0 0 4px;
    text-align: left;
    background-image: linear-gradient(#eee, #e8e8e8 50%, #dcdcdc 51%, #f2f2f2);
    box-shadow: inset 0 0 0 1px #c4c4c4;
}

.hours thead th {
    border-right-width: 2px;
}

.hours .corner,
.hours tbody th {
    width: 99px;
    padding-left: 13px;
    border-right-width: 2px;
}

.hours td {
    background-color: #d79816;
}

.prices {
    display: flex;
    gap: 6px;
    margin-top: 9px;
}

.price {
    flex: 1;
    height: 30px;
    display: flex;
    align-items: center;
    justify-content: flex-end;
    gap: 3px;
    padding-right: 6px;
    border: 1px solid #b3b3b3;
    box-shadow: inset 0 0 0 1px #d1d1d1;
    color: #fff;
    font-size: 12px;
}

.price .field {
    width: 74px;
    color: #000;
    font-size: 11px;
}

.gold {
    background: #d79816;
}

.red {
    background: #b92a2a;
}

.green {
    background: #1a7a2f;
}

.blue {
    background: #015a80;
}

.customers {
    display: flex;
    align-items: flex-start;
    gap: 10px;
    margin-top: 8px;
}

.panel {
    width: 220px;
    min-height: 109px;
    border: 1px solid #b3b3b3;
}

.panel-title {
    height: 17px;
    padding-top: 1px;
    border-bottom: 1px solid #999;
    background: linear-gradient(#b6b6b6, #a8a8a8);
    text-align: center;
}

.rows {
    display: flex;
    flex-direction: column;
    gap: 3px;
    padding: 10px 10px 0 0;
}

.rows label {
    display: flex;
    align-items: center;
    justify-content: flex-end;
    gap: 6px;
    white-space: nowrap;
}

.rows .field {
    width: 108px;
}

.save {
    flex: 1;
    height: 37px;
    margin: 20px 0 0 1px;
    border: 1px solid #555;
    border-radius: 12px;
    background: linear-gradient(#f2f2f2, #e6e6e6 38%, #d2d2d2 40%, #e0e0e0 65%, #fff 90%);
    box-shadow: inset 3px 0 3px -1px #aaa, inset -3px 0 3px -1px #aaa;
}

/* red highlight frames */
.marked {
    position: relative;
}

.marked::after {
    content: "";
    position: absolute;
    inset: -7px -7px -7px -17px;
    border: 5px solid #ed1c24;
    pointer-events: none;
}

.panel.marked::after {
    inset: -7px -7px -19px -11px;
}

.rows.marked::after {
    inset: -2px 1px -11px -4px;
}

/* taskbar */
.taskbar {
    flex: none;
    height: 40px;
    display: flex;
    background:
        repeating-linear-gradient(80deg, transparent 0 6px, rgba(255, 255, 255, .04) 7px, transparent 8px 17px),
        repeating-linear-gradient(102deg, transparent 0 9px, rgba(255, 255, 255, .04) 10px, transparent 11px 23px),
        #202020;
}

.task {
    width: 48px;
    display: flex;
    align-items: center;
    justify-content: center;
}

.task.pin {
    width: 40px;
    margin-left: 9px;
}

.task:nth-child(4) {
    margin-left: 6px;
}

.task.open {
    border-bottom: 1px solid #d0d0d0;
}

.tray {
    margin-left: auto;
    padding-right: 3px;
    display: flex;
    align-items: center;
    gap: 7px;
}
```
FILE: script.js
```js
const days = ["Monday", "Tuesday", "Wednesday", "Thursday", "Friday", "Saturday", "Sunday"];
const head = document.getElementById("hourhead");
const body = document.getElementById("hourbody");

for (let hour = 0; hour < 24; hour++) {
    const th = document.createElement("th");
    th.innerText = hour;
    head.appendChild(th);
}

for (const day of days) {
    const row = document.createElement("tr");
    const th = document.createElement("th");
    th.innerText = day;
    row.appendChild(th);
    for (let hour = 0; hour < 24; hour++) {
        row.appendChild(document.createElement("td"));
    }
    body.appendChild(row);
}
```
